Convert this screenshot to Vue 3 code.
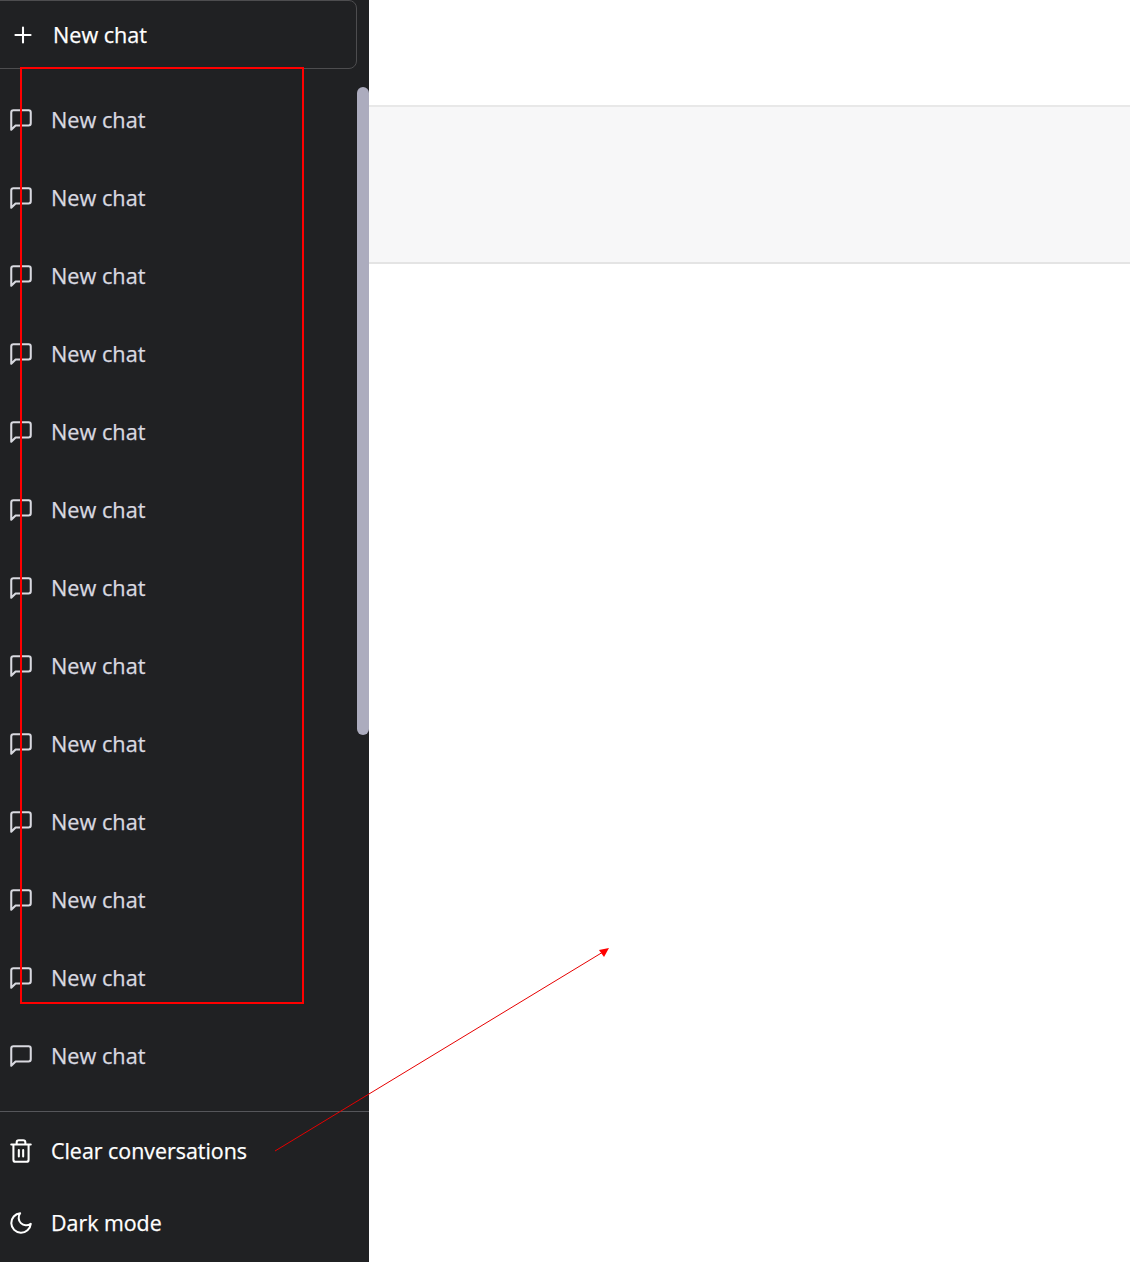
<script setup>
const rows = Array.from({ length: 13 }, (_, i) => i)
</script>

<template>
  <div class="page">
    <aside class="sidebar">
      <button class="new-btn" type="button">
        <svg class="ic plus" viewBox="0 0 24 24"><path d="M12 5v14M5 12h14" /></svg>
        <span>New chat</span>
      </button>
      <nav class="list">
        <a v-for="r in rows" :key="r" class="row">
          <svg class="ic" viewBox="0 0 24 24"><path d="M21 15a2 2 0 0 1-2 2H7l-4 4V5a2 2 0 0 1 2-2h14a2 2 0 0 1 2 2z" /></svg>
          <span class="label">New chat</span>
        </a>
      </nav>
      <footer class="foot">
        <a class="foot-row">
          <svg class="ic" viewBox="0 0 24 24"><path d="M3 6h18M19 6v14a2 2 0 0 1-2 2H7a2 2 0 0 1-2-2V6M8 6V4a2 2 0 0 1 2-2h4a2 2 0 0 1 2 2v2M10 11v6M14 11v6" /></svg>
          <span class="label">Clear conversations</span>
        </a>
        <a class="foot-row">
          <svg class="ic" viewBox="0 0 24 24"><path d="M21 12.79A9 9 0 1 1 11.21 3 7 7 0 0 0 21 12.79z" /></svg>
          <span class="label">Dark mode</span>
        </a>
      </footer>
      <div class="thumb"></div>
    </aside>
    <main class="main">
      <div class="band"></div>
    </main>
    <div class="mark-box"></div>
    <svg class="mark-arrow" width="1130" height="1262" viewBox="0 0 1130 1262">
      <line x1="275" y1="1151" x2="603" y2="952" />
      <polygon points="609,948 599,950 604,957" />
    </svg>
  </div>
</template>

<style scoped>
.page {
  position: relative;
  display: flex;
  width: 1130px;
  height: 1262px;
  overflow: hidden;
  background: #fff;
  font-family: "Open Sans", "Noto Sans", "Liberation Sans", sans-serif;
}
.sidebar {
  position: relative;
  flex: 0 0 369px;
  display: flex;
  flex-direction: column;
  background: #202123;
  color: #fff;
  -webkit-text-stroke: 0.25px currentColor;
}
.ic {
  flex: none;
  width: 26px;
  height: 26px;
  fill: none;
  stroke: currentColor;
  stroke-width: 1.9;
  stroke-linecap: round;
  stroke-linejoin: round;
}
.label {
  padding-bottom: 2px;
}
.new-btn {
  display: flex;
  align-items: center;
  gap: 17px;
  width: 367px;
  height: 69px;
  margin-left: -10px;
  padding: 0 0 0 19px;
  background: transparent;
  border: 1px solid #4d4d4f;
  border-radius: 8px;
  color: #fff;
  font: inherit;
  font-size: 21.6px;
}
.list {
  flex: 1;
  padding-top: 12px;
}
.row {
  display: flex;
  align-items: center;
  gap: 17px;
  height: 78px;
  padding-left: 8px;
  color: #d9d9e0;
  font-size: 21.7px;
}
.foot {
  height: 151px;
  padding-top: 4px;
  box-sizing: border-box;
  border-top: 1px solid #55565a;
}
.foot-row {
  display: flex;
  align-items: center;
  gap: 17px;
  height: 72px;
  padding-left: 8px;
  color: #fff;
  font-size: 21.4px;
}
.foot-row:first-child {
  margin-top: -1px;
}
.thumb {
  position: absolute;
  top: 87px;
  right: 0;
  width: 12px;
  height: 648px;
  border-radius: 6px;
  background: #acacbe;
}
.main {
  flex: 1;
  padding-top: 105px;
}
.band {
  height: 159px;
  box-sizing: border-box;
  background: #f7f7f8;
  border-top: 2px solid #e8e8e8;
  border-bottom: 2px solid #e4e4e4;
}
.mark-box {
  position: absolute;
  left: 20px;
  top: 67px;
  width: 284px;
  height: 937px;
  box-sizing: border-box;
  border: 2px solid #f00;
}
.mark-arrow {
  position: absolute;
  left: 0;
  top: 0;
  pointer-events: none;
}
.mark-arrow line {
  stroke: #e60000;
  stroke-width: 1;
}
.mark-arrow polygon {
  fill: #f00;
}
</style>
